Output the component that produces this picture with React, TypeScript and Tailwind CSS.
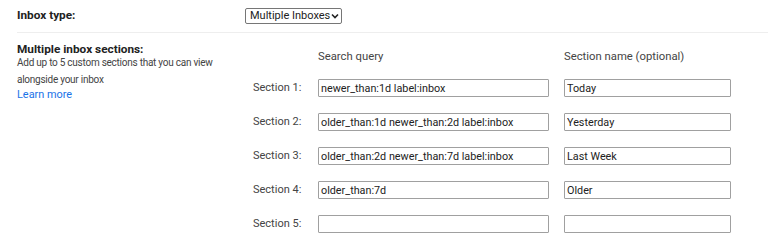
import React from 'react';

const sections = [
  { query: 'newer_than:1d label:inbox', name: 'Today' },
  { query: 'older_than:1d newer_than:2d label:inbox', name: 'Yesterday' },
  { query: 'older_than:2d newer_than:7d label:inbox', name: 'Last Week' },
  { query: 'older_than:7d', name: 'Older' },
  { query: '', name: '' },
];

export default function App() {
  return (
    <div className="w-[768px] h-[249px] bg-white overflow-hidden font-['Roboto',Arial,sans-serif] text-[#222]">
      <div className="pl-[17px]">
        {/* Inbox type row */}
        <div className="flex items-center h-[33px] pb-[1px] border-b border-[#eeeeee]">
          <div className="w-[228px] text-[11.8px] font-bold text-[#222]">Inbox type:</div>
          <div className="flex items-center h-[16px] w-[97px] border border-[#767676] rounded-[2px] pl-[4px] pr-[2px] text-[11px] text-[#222] leading-none whitespace-nowrap">
            <span className="flex-1">Multiple Inboxes</span>
            <svg width="8" height="6" viewBox="0 0 8 6" className="mt-[1px]">
              <path d="M1 1.5 L4 4.5 L7 1.5" fill="none" stroke="#222" strokeWidth="1.6" />
            </svg>
          </div>
        </div>

        {/* Multiple inbox sections */}
        <div className="flex pt-[9px]">
          <div className="w-[228px]">
            <div className="text-[11.8px] font-bold text-[#222] leading-[14px]">Multiple inbox sections:</div>
            <div className="text-[10px] tracking-[-0.25px] text-[#444] leading-[17px] -mt-[2px]">
              Add up to 5 custom sections that you can view
              <br />
              alongside your inbox
            </div>
            <div className="text-[10.9px] text-[#1a73e8] leading-[14px]">Learn more</div>
          </div>

          <div className="flex-1">
            <div className="flex h-[28px] items-center text-[11.3px] text-[#444] pt-[2px]">
              <div className="w-[73px]" />
              <div className="w-[246px]">Search query</div>
              <div>Section name (optional)</div>
            </div>
            <div className="flex flex-col gap-[16px] pt-[9px]">
              {sections.map((s, i) => (
                <div key={i} className="flex items-center h-[18px]">
                  <div className="w-[73px] pl-[8px] text-[11px] text-[#444]">Section {i + 1}:</div>
                  <input
                    readOnly
                    value={s.query}
                    className="w-[231px] h-[18px] border border-[#a0a0a0] rounded-[1px] px-[2px] text-[10.8px] text-[#222] outline-none"
                  />
                  <div className="w-[15px]" />
                  <input
                    readOnly
                    value={s.name}
                    className="w-[167px] h-[18px] border border-[#a0a0a0] rounded-[1px] px-[2px] text-[10.8px] text-[#222] outline-none"
                  />
                </div>
              ))}
            </div>
          </div>
        </div>
      </div>
    </div>
  );
}
